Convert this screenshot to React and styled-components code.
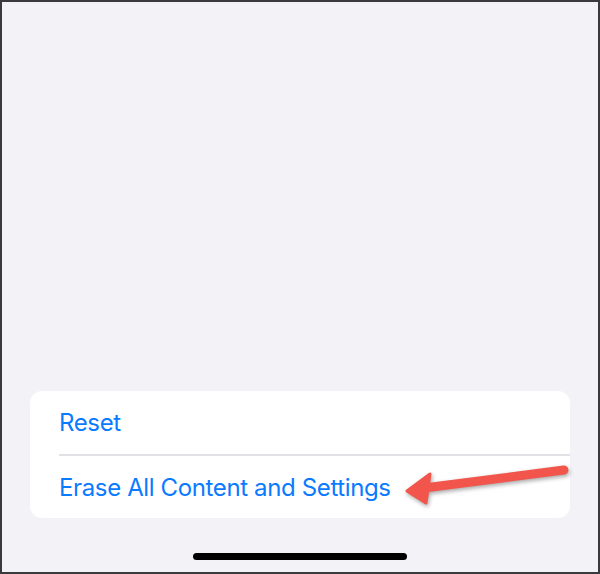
import React from "react";
import styled, { createGlobalStyle } from "styled-components";

const GlobalStyle = createGlobalStyle`
	html, body {
		margin: 0;
		padding: 0;
	}
	body {
		font-family: Inter, "Liberation Sans", sans-serif;
	}
`;

const Screen = styled.div`
	position: relative;
	box-sizing: border-box;
	width: 600px;
	height: 574px;
	border: 2px solid #3a3a3c;
	background: #f2f2f7;
	display: flex;
	flex-direction: column;
	justify-content: flex-end;
	align-items: stretch;
	padding: 0 28px 12px;
`;

const Group = styled.div`
	background: #ffffff;
	border-radius: 12px;
	display: flex;
	flex-direction: column;
	overflow: hidden;
`;

const Row = styled.div`
	height: ${props => props.h}px;
	display: flex;
	align-items: center;
	padding-left: 29px;
	color: #0a7aff;
	font-size: 24px;
	letter-spacing: -0.37px;
`;

const Separator = styled.div`
	height: 2px;
	margin-left: 29px;
	background: #e2e2e6;
`;

const HomeBar = styled.div`
	align-self: center;
	width: 214px;
	height: 7px;
	border-radius: 4px;
	background: #000;
	margin-top: 35px;
`;

const Arrow = styled.svg`
	position: absolute;
	left: 0;
	top: 0;
	overflow: visible;
	filter: drop-shadow(1px 2px 2px rgba(0, 0, 0, 0.35));
`;

const App = () => (
	<>
		<GlobalStyle />
		<Screen>
			<Group>
				<Row h={63}>Reset</Row>
				<Separator />
				<Row h={62}>Erase All Content and Settings</Row>
			</Group>
			<HomeBar />
			<Arrow width="600" height="574" viewBox="0 0 600 574">
				<line x1="422" y1="486" x2="562" y2="468" stroke="#f2554b" strokeWidth="9" strokeLinecap="round" />
				<polygon points="405,489 428,472 424,501" fill="#f2554b" strokeLinejoin="round" stroke="#f2554b" strokeWidth="3" />
			</Arrow>
		</Screen>
	</>
);

export default App;
